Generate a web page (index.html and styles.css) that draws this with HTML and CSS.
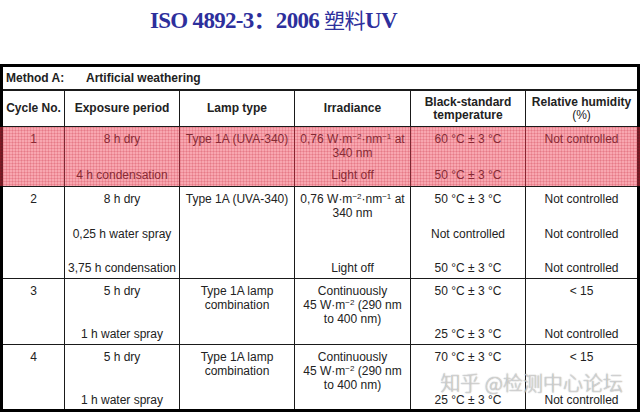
FILE: index.html
```html
<!DOCTYPE html>
<html lang="zh">
<head>
    <meta charset="UTF-8">
    <title>ISO 4892-3：2006 塑料UV</title>
    <link rel="stylesheet" href="styles.css">
</head>
<body>
    <h1 class="title">ISO 4892-3：2006 <span class="cjk">塑料</span>UV</h1>

    <div class="sheet">
        <div class="method">
            <span class="method-label">Method A:</span>
            <span>Artificial weathering</span>
        </div>

        <div class="row head">
            <div class="cell">Cycle No.</div>
            <div class="cell">Exposure period</div>
            <div class="cell">Lamp type</div>
            <div class="cell">Irradiance</div>
            <div class="cell">Black-standard<br>temperature</div>
            <div class="cell">Relative humidity<br><span class="light">(%)</span></div>
        </div>

        <!-- cycle 1 is marked -->
        <div class="row r1 marked">
            <div class="cell"><div>1</div></div>
            <div class="cell"><div>8 h dry</div><div>4 h condensation</div></div>
            <div class="cell"><div>Type 1A (UVA-340)</div></div>
            <div class="cell"><div>0,76 W·m<sup>−2</sup>·nm<sup>−1</sup> at<br>340 nm</div><div>Light off</div></div>
            <div class="cell"><div>60 °C ± 3 °C</div><div>50 °C ± 3 °C</div></div>
            <div class="cell"><div>Not controlled</div></div>
        </div>

        <div class="row r2">
            <div class="cell"><div>2</div></div>
            <div class="cell"><div>8 h dry</div><div>0,25 h water spray</div><div>3,75 h condensation</div></div>
            <div class="cell"><div>Type 1A (UVA-340)</div></div>
            <div class="cell"><div>0,76 W·m<sup>−2</sup>·nm<sup>−1</sup> at<br>340 nm</div><div>Light off</div></div>
            <div class="cell"><div>50 °C ± 3 °C</div><div>Not controlled</div><div>50 °C ± 3 °C</div></div>
            <div class="cell"><div>Not controlled</div><div>Not controlled</div><div>Not controlled</div></div>
        </div>

        <div class="row r3">
            <div class="cell"><div>3</div></div>
            <div class="cell"><div>5 h dry</div><div>1 h water spray</div></div>
            <div class="cell"><div>Type 1A lamp<br>combination</div></div>
            <div class="cell"><div>Continuously<br>45 W·m<sup>−2</sup> (290 nm<br>to 400 nm)</div></div>
            <div class="cell"><div>50 °C ± 3 °C</div><div>25 °C ± 3 °C</div></div>
            <div class="cell"><div>&lt; 15</div><div>Not controlled</div></div>
        </div>

        <div class="row r4">
            <div class="cell"><div>4</div></div>
            <div class="cell"><div>5 h dry</div><div>1 h water spray</div></div>
            <div class="cell"><div>Type 1A lamp<br>combination</div></div>
            <div class="cell"><div>Continuously<br>45 W·m<sup>−2</sup> (290 nm<br>to 400 nm)</div></div>
            <div class="cell"><div>70 °C ± 3 °C</div><div>25 °C ± 3 °C</div></div>
            <div class="cell"><div>&lt; 15</div><div>Not controlled</div></div>
        </div>

        <div class="watermark">知乎 @检测中心论坛</div>
    </div>
</body>
</html>
```
FILE: styles.css
```css
body {
    margin: 0;
    background-color: #fff;
    font-family: "Liberation Sans", Arial, sans-serif;
    font-size: 12px;
    color: #222;
}

.title {
    height: 64px;
    margin: 0;
    padding: 4px 0 0 150px;
    box-sizing: border-box;
    text-align: left;
    font-family: "Liberation Serif", "Noto Sans CJK SC", serif;
    font-size: 23px;
    line-height: 30px;
    font-weight: bold;
    letter-spacing: -0.7px;
    color: #2d2f9c;
}

.title .cjk {
    font-family: "Noto Sans CJK SC", sans-serif;
    font-weight: normal;
    font-size: 21px;
    letter-spacing: -0.5px;
}

.sheet {
    position: relative;
    display: flex;
    flex-direction: column;
    gap: 1px;
    border: 3px solid #000;
    background-color: #1a1a1a;
}

.method {
    height: 22px;
    display: flex;
    align-items: center;
    padding-left: 3px;
    border-bottom: 1px solid #1a1a1a;
    background-color: #fff;
    font-weight: bold;
}

.method-label {
    width: 80px;
}

.row {
    position: relative;
    display: grid;
    grid-template-columns: 61px 114px 114px 115px 114px 111px;
    gap: 1px;
}

.cell {
    display: flex;
    flex-direction: column;
    justify-content: space-between;
    align-items: center;
    text-align: center;
    padding: 5px 2px 3px;
    line-height: 14px;
    background-color: #fff;
}

.head {
    height: 35px;
    font-weight: bold;
}

.head .cell {
    justify-content: center;
    padding: 0 2px;
    line-height: 13px;
}

.light {
    font-weight: normal;
}

.r1 { height: 59px; }
.r2 { height: 91px; }
.r3 { height: 65px; }
.r4 { height: 64px; }

.r1 .cell {
    padding-bottom: 4px;
}

.r4 .cell {
    padding-bottom: 2px;
}

sup {
    font-size: 8px;
    line-height: 0;
    vertical-align: 4px;
}

.marked::after {
    content: '';
    position: absolute;
    top: 0;
    bottom: 0;
    left: -3px;
    right: -3px;
    background-color: rgba(240, 60, 80, 0.45);
    background-image:
        linear-gradient(rgba(190, 20, 40, 0.16) 1px, transparent 1px),
        linear-gradient(90deg, rgba(190, 20, 40, 0.16) 1px, transparent 1px);
    background-size: 3px 3px;
    pointer-events: none;
}

.watermark {
    position: absolute;
    right: 14px;
    bottom: 14px;
    font-family: "Noto Sans CJK SC", sans-serif;
    font-size: 20px;
    line-height: 24px;
    font-weight: 300;
    color: rgba(255, 255, 255, 0.55);
    text-shadow: 0 0 1px rgba(110, 110, 110, 0.55), 0 0 1px rgba(110, 110, 110, 0.55);
    pointer-events: none;
}
```
